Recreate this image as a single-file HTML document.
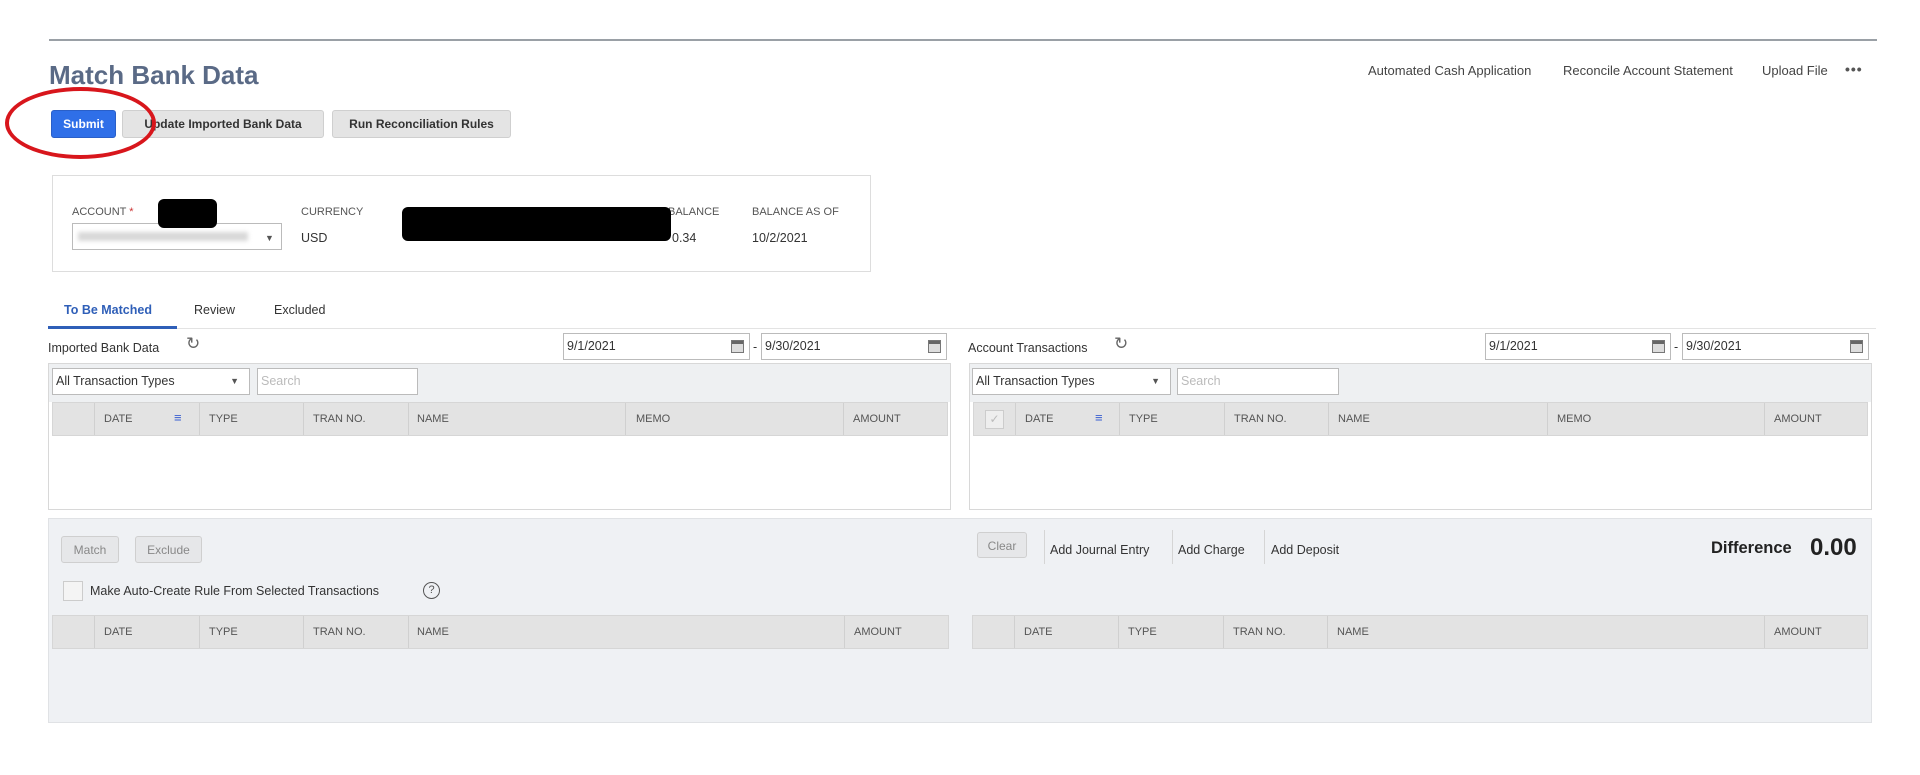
<!DOCTYPE html>
<html><head><meta charset="utf-8"><style>
*{margin:0;padding:0;box-sizing:border-box}
body{width:1920px;height:775px;background:#fff;font-family:"Liberation Sans",sans-serif;color:#333;position:relative;overflow:hidden}
.a{position:absolute}
.t{position:absolute;white-space:nowrap;font-size:12.5px;color:#333;line-height:16px}
.btn{position:absolute;background:#e4e4e4;border:1px solid #cfcfcf;border-radius:3px;font-size:12px;font-weight:bold;color:#333;text-align:center;line-height:26px;white-space:nowrap}
.hdr{position:absolute;height:34px;background:#e3e3e3;border:1px solid #d6d6d6}
.hdr span{position:absolute;top:10px;font-size:11px;color:#555;white-space:nowrap}
.vl{position:absolute;top:0;width:1px;height:100%;background:#d0d0d0}
.inp{position:absolute;background:#fff;border:1px solid #bbb;font-size:12.5px;color:#333;padding-left:3px;line-height:25px;white-space:nowrap}
.cal{position:absolute;right:5px;top:6px;width:13px;height:13px;border:1px solid #777;background:#ddd}
.cal:before{content:"";position:absolute;left:0;right:0;top:0;height:3px;background:#666}
</style></head><body>
<div class="a" style="left:49px;top:39px;width:1828px;height:2px;background:#9aa0a6"></div>
<div class="t" style="left:49px;top:59px;font-size:26px;line-height:32px;font-weight:bold;color:#5a6a86">Match Bank Data</div>
<div class="t" style="left:1368px;top:63px;font-size:13px;color:#444">Automated Cash Application</div>
<div class="t" style="left:1563px;top:63px;font-size:13px;color:#444">Reconcile Account Statement</div>
<div class="t" style="left:1762px;top:63px;font-size:13px;color:#444">Upload File</div>
<div class="t" style="left:1845px;top:61px;font-size:14px;color:#555;letter-spacing:1px;font-weight:bold">•••</div>

<div class="btn" style="left:51px;top:110px;width:65px;height:28px;background:#2f6fe8;border-color:#2a5fc8;color:#fff">Submit</div>
<div class="btn" style="left:122px;top:110px;width:202px;height:28px">Update Imported Bank Data</div>
<div class="btn" style="left:332px;top:110px;width:179px;height:28px">Run Reconciliation Rules</div>
<div class="a" style="left:5px;top:87px;width:151px;height:72px;border:4px solid #d8161c;border-radius:50%"></div>

<div class="a" style="left:52px;top:175px;width:819px;height:97px;border:1px solid #ddd"></div>
<div class="t" style="left:72px;top:204px;font-size:11px;color:#555">ACCOUNT <span style="color:#c33">*</span></div>
<div class="t" style="left:301px;top:204px;font-size:11px;color:#555">CURRENCY</div>
<div class="t" style="left:635px;top:204px;font-size:11px;color:#555">BANK BALANCE</div>
<div class="t" style="left:752px;top:204px;font-size:11px;color:#555">BALANCE AS OF</div>
<div class="a" style="left:72px;top:223px;width:210px;height:27px;border:1px solid #bbb;background:#fff"></div>
<div class="a" style="left:78px;top:232px;width:170px;height:9px;background:#d8d8d8;filter:blur(2px)"></div>
<div class="t" style="left:265px;top:230px;font-size:9px;color:#555">▼</div>
<div class="t" style="left:301px;top:230px">USD</div>
<div class="t" style="left:672px;top:230px">0.34</div>
<div class="t" style="left:752px;top:230px">10/2/2021</div>
<div class="a" style="left:158px;top:199px;width:59px;height:29px;background:#000;border-radius:6px"></div>
<div class="a" style="left:402px;top:207px;width:269px;height:34px;background:#000;border-radius:6px"></div>

<div class="t" style="left:64px;top:302px;color:#2f5fb8;font-weight:bold;font-size:12.5px">To Be Matched</div>
<div class="t" style="left:194px;top:302px">Review</div>
<div class="t" style="left:274px;top:302px">Excluded</div>
<div class="a" style="left:48px;top:328px;width:1828px;height:1px;background:#e3e3e3"></div>
<div class="a" style="left:48px;top:326px;width:129px;height:3px;background:#2f5fb8"></div>

<!-- left panel -->
<div class="t" style="left:48px;top:340px">Imported Bank Data</div>
<div class="t" style="left:186px;top:336px;font-size:17px;color:#666">↻</div>
<div class="inp" style="left:563px;top:333px;width:187px;height:27px">9/1/2021<div class="cal"></div></div>
<div class="t" style="left:753px;top:339px">-</div>
<div class="inp" style="left:761px;top:333px;width:186px;height:27px">9/30/2021<div class="cal"></div></div>
<div class="a" style="left:48px;top:363px;width:903px;height:147px;border:1px solid #d8d8d8;background:#fff"></div>
<div class="a" style="left:49px;top:364px;width:901px;height:38px;background:#eef0f2"></div>
<div class="inp" style="left:52px;top:368px;width:198px;height:27px">All Transaction Types<span style="position:absolute;right:10px;font-size:9px;color:#555">▼</span></div>
<div class="inp" style="left:257px;top:368px;width:161px;height:27px;color:#bbb">Search</div>
<div class="hdr" style="left:52px;top:402px;width:896px">
<div class="vl" style="left:41px"></div><div class="vl" style="left:146px"></div><div class="vl" style="left:250px"></div><div class="vl" style="left:355px"></div><div class="vl" style="left:572px"></div><div class="vl" style="left:790px"></div>
<span style="left:51px">DATE</span><span style="left:121px;top:7px;color:#3a5fd0;font-size:13px;font-weight:bold">≡</span><span style="left:156px">TYPE</span><span style="left:260px">TRAN NO.</span><span style="left:364px">NAME</span><span style="left:583px">MEMO</span><span style="left:800px">AMOUNT</span></div>

<!-- right panel -->
<div class="t" style="left:968px;top:340px">Account Transactions</div>
<div class="t" style="left:1114px;top:336px;font-size:17px;color:#666">↻</div>
<div class="inp" style="left:1485px;top:333px;width:186px;height:27px">9/1/2021<div class="cal"></div></div>
<div class="t" style="left:1674px;top:339px">-</div>
<div class="inp" style="left:1682px;top:333px;width:187px;height:27px">9/30/2021<div class="cal"></div></div>
<div class="a" style="left:969px;top:363px;width:903px;height:147px;border:1px solid #d8d8d8;background:#fff"></div>
<div class="a" style="left:970px;top:364px;width:901px;height:38px;background:#eef0f2"></div>
<div class="inp" style="left:972px;top:368px;width:199px;height:27px">All Transaction Types<span style="position:absolute;right:10px;font-size:9px;color:#555">▼</span></div>
<div class="inp" style="left:1177px;top:368px;width:162px;height:27px;color:#bbb">Search</div>
<div class="hdr" style="left:973px;top:402px;width:895px">
<div class="vl" style="left:41px"></div><div class="vl" style="left:145px"></div><div class="vl" style="left:250px"></div><div class="vl" style="left:354px"></div><div class="vl" style="left:573px"></div><div class="vl" style="left:790px"></div>
<div style="position:absolute;left:11px;top:7px;width:19px;height:19px;border:1px solid #ccc;background:#eee;color:#bbb;font-size:12px;text-align:center;line-height:17px">✓</div>
<span style="left:51px">DATE</span><span style="left:121px;top:7px;color:#3a5fd0;font-size:13px;font-weight:bold">≡</span><span style="left:155px">TYPE</span><span style="left:260px">TRAN NO.</span><span style="left:364px">NAME</span><span style="left:583px">MEMO</span><span style="left:800px">AMOUNT</span></div>

<!-- lower -->
<div class="a" style="left:48px;top:518px;width:1824px;height:205px;background:#eff1f4;border:1px solid #e0e2e5"></div>
<div class="btn" style="left:61px;top:536px;width:58px;height:27px;font-weight:normal;color:#888;background:#e6e7e9">Match</div>
<div class="btn" style="left:135px;top:536px;width:67px;height:27px;font-weight:normal;color:#888;background:#e6e7e9">Exclude</div>
<div class="a" style="left:63px;top:581px;width:20px;height:20px;border:1px solid #ccc;background:#f4f4f4"></div>
<div class="t" style="left:90px;top:583px">Make Auto-Create Rule From Selected Transactions</div>
<div class="a" style="left:423px;top:582px;width:17px;height:17px;border:1.5px solid #555;border-radius:50%;font-size:11px;text-align:center;line-height:14px;color:#555">?</div>
<div class="hdr" style="left:52px;top:615px;width:897px">
<div class="vl" style="left:41px"></div><div class="vl" style="left:146px"></div><div class="vl" style="left:250px"></div><div class="vl" style="left:355px"></div><div class="vl" style="left:791px"></div>
<span style="left:51px">DATE</span><span style="left:156px">TYPE</span><span style="left:260px">TRAN NO.</span><span style="left:364px">NAME</span><span style="left:801px">AMOUNT</span></div>

<div class="btn" style="left:977px;top:532px;width:50px;height:26px;font-weight:normal;color:#888;background:#e6e7e9">Clear</div>
<div class="a" style="left:1044px;top:530px;width:1px;height:34px;background:#d5d5d5"></div>
<div class="a" style="left:1172px;top:530px;width:1px;height:34px;background:#d5d5d5"></div>
<div class="a" style="left:1264px;top:530px;width:1px;height:34px;background:#d5d5d5"></div>
<div class="t" style="left:1050px;top:542px">Add Journal Entry</div>
<div class="t" style="left:1178px;top:542px">Add Charge</div>
<div class="t" style="left:1271px;top:542px">Add Deposit</div>
<div class="t" style="left:1711px;top:538px;font-size:16.5px;line-height:20px;font-weight:bold;color:#222">Difference</div>
<div class="t" style="left:1810px;top:534px;font-size:24px;line-height:28px;font-weight:bold;color:#222">0.00</div>
<div class="hdr" style="left:972px;top:615px;width:896px">
<div class="vl" style="left:41px"></div><div class="vl" style="left:145px"></div><div class="vl" style="left:250px"></div><div class="vl" style="left:354px"></div><div class="vl" style="left:791px"></div>
<span style="left:51px">DATE</span><span style="left:155px">TYPE</span><span style="left:260px">TRAN NO.</span><span style="left:364px">NAME</span><span style="left:801px">AMOUNT</span></div>
</body></html>
